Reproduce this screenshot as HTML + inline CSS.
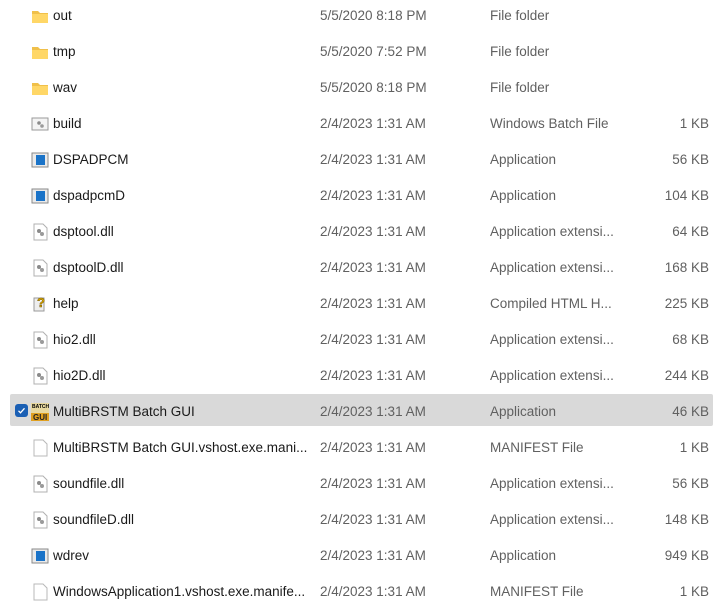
<!DOCTYPE html>
<html><head><meta charset="utf-8"><style>
body{margin:0;width:719px;height:610px;background:#fff;overflow:hidden;font-family:"Liberation Sans",sans-serif;font-size:13.5px;}
.r{position:absolute;left:0;width:719px;height:32px;}
.r span{position:absolute;top:9px;white-space:nowrap;}
.n{left:53px;color:#1a1a1a}
.d{left:320px;color:#606060}
.t{left:490px;color:#606060}
.s{right:10px;color:#606060}
.ic{position:absolute;left:31px;top:8px;width:18px;height:18px}
.sel{background:#d9d9d9;left:10px;width:703px;border-radius:2px}
.sel span{top:10px}
.sel .n{left:43px}.sel .d{left:310px}.sel .t{left:480px}.sel .s{right:4px}.sel .ic{left:21px;top:9px}
</style></head><body>
<svg width="0" height="0" style="position:absolute"><defs>
<g id="fold"><path d="M1 4h6l2 2h8v10H1z" fill="#f0c04a"/><path d="M1 7h16v9H1z" fill="#ffd767"/></g>
<g id="dll"><path d="M3 1h9l4 4v12H3z" fill="#fff" stroke="#b0b0b0"/><circle cx="8" cy="8" r="2" fill="#8a8a8a"/><circle cx="11" cy="11" r="2" fill="#9a9a9a"/></g>
<g id="bat"><rect x="1" y="3" width="16" height="12" fill="#f4f4f4" stroke="#9a9a9a"/><circle cx="8" cy="8" r="1.8" fill="#8a8a8a"/><circle cx="11" cy="11" r="1.8" fill="#9a9a9a"/></g>
<g id="app"><rect x="1" y="2" width="16" height="14" fill="#eaeaea" stroke="#8a8a8a"/><rect x="5" y="4" width="9" height="10" fill="#1a73c8"/></g>
<g id="doc"><path d="M3 1h9l4 4v12H3z" fill="#fff" stroke="#b8b8b8"/></g>
<g id="help"><path d="M3 3h10v13H3z" fill="#eee" stroke="#999"/><text x="6" y="12" font-size="13" font-weight="bold" fill="#e0b000" stroke="#705000" stroke-width=".5" font-family="Liberation Sans">?</text></g>
</defs></svg>

<div class="r" style="top:-1px"><svg class="ic"><use href="#fold"/></svg><span class="n">out</span><span class="d">5/5/2020 8:18 PM</span><span class="t">File folder</span></div>
<div class="r" style="top:35px"><svg class="ic"><use href="#fold"/></svg><span class="n">tmp</span><span class="d">5/5/2020 7:52 PM</span><span class="t">File folder</span></div>
<div class="r" style="top:71px"><svg class="ic"><use href="#fold"/></svg><span class="n">wav</span><span class="d">5/5/2020 8:18 PM</span><span class="t">File folder</span></div>
<div class="r" style="top:107px"><svg class="ic"><use href="#bat"/></svg><span class="n">build</span><span class="d">2/4/2023 1:31 AM</span><span class="t">Windows Batch File</span><span class="s">1 KB</span></div>
<div class="r" style="top:143px"><svg class="ic"><use href="#app"/></svg><span class="n">DSPADPCM</span><span class="d">2/4/2023 1:31 AM</span><span class="t">Application</span><span class="s">56 KB</span></div>
<div class="r" style="top:179px"><svg class="ic"><use href="#app"/></svg><span class="n">dspadpcmD</span><span class="d">2/4/2023 1:31 AM</span><span class="t">Application</span><span class="s">104 KB</span></div>
<div class="r" style="top:215px"><svg class="ic"><use href="#dll"/></svg><span class="n">dsptool.dll</span><span class="d">2/4/2023 1:31 AM</span><span class="t">Application extensi...</span><span class="s">64 KB</span></div>
<div class="r" style="top:251px"><svg class="ic"><use href="#dll"/></svg><span class="n">dsptoolD.dll</span><span class="d">2/4/2023 1:31 AM</span><span class="t">Application extensi...</span><span class="s">168 KB</span></div>
<div class="r" style="top:287px"><svg class="ic"><use href="#help"/></svg><span class="n">help</span><span class="d">2/4/2023 1:31 AM</span><span class="t">Compiled HTML H...</span><span class="s">225 KB</span></div>
<div class="r" style="top:323px"><svg class="ic"><use href="#dll"/></svg><span class="n">hio2.dll</span><span class="d">2/4/2023 1:31 AM</span><span class="t">Application extensi...</span><span class="s">68 KB</span></div>
<div class="r" style="top:359px"><svg class="ic"><use href="#dll"/></svg><span class="n">hio2D.dll</span><span class="d">2/4/2023 1:31 AM</span><span class="t">Application extensi...</span><span class="s">244 KB</span></div>
<div class="r sel" style="top:394px"><svg style="position:absolute;left:5px;top:10px" width="13" height="13"><rect width="13" height="13" rx="3" fill="#1a5fb4"/><path d="M3.5 6.8l2 2 4-4.5" stroke="#fff" stroke-width="1.3" fill="none"/></svg><svg class="ic" width="18" height="18"><rect x="0" y="0" width="18" height="18" fill="#e8d9a0"/><text x="1" y="5" font-size="5" font-weight="bold" font-family="Liberation Sans">BATCH</text><rect x="0" y="10" width="18" height="8" fill="#e0a020"/><text x="2" y="17" font-size="8" font-weight="bold" fill="#222" font-family="Liberation Sans">GUI</text></svg><span class="n">MultiBRSTM Batch GUI</span><span class="d">2/4/2023 1:31 AM</span><span class="t">Application</span><span class="s">46 KB</span></div>
<div class="r" style="top:431px"><svg class="ic"><use href="#doc"/></svg><span class="n">MultiBRSTM Batch GUI.vshost.exe.mani...</span><span class="d">2/4/2023 1:31 AM</span><span class="t">MANIFEST File</span><span class="s">1 KB</span></div>
<div class="r" style="top:467px"><svg class="ic"><use href="#dll"/></svg><span class="n">soundfile.dll</span><span class="d">2/4/2023 1:31 AM</span><span class="t">Application extensi...</span><span class="s">56 KB</span></div>
<div class="r" style="top:503px"><svg class="ic"><use href="#dll"/></svg><span class="n">soundfileD.dll</span><span class="d">2/4/2023 1:31 AM</span><span class="t">Application extensi...</span><span class="s">148 KB</span></div>
<div class="r" style="top:539px"><svg class="ic"><use href="#app"/></svg><span class="n">wdrev</span><span class="d">2/4/2023 1:31 AM</span><span class="t">Application</span><span class="s">949 KB</span></div>
<div class="r" style="top:575px"><svg class="ic"><use href="#doc"/></svg><span class="n">WindowsApplication1.vshost.exe.manife...</span><span class="d">2/4/2023 1:31 AM</span><span class="t">MANIFEST File</span><span class="s">1 KB</span></div>
</body></html>
